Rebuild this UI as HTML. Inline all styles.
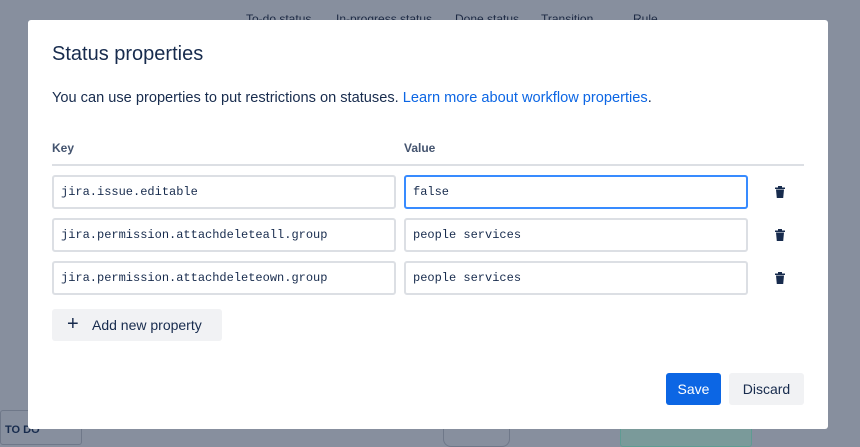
<!DOCTYPE html>
<html><head><style>
body{margin:0;width:860px;height:445px;background:#878f9e;font-family:"Liberation Sans",sans-serif;position:relative;overflow:hidden;color:#172b4d}
.bgt{position:absolute;top:12px;font-size:12px;color:#1d2a44}
.modal{position:absolute;left:28px;top:20px;width:800px;height:409px;background:#fff;border-radius:3px}
h1{position:absolute;left:24px;top:23px;margin:0;font-size:20px;font-weight:500;color:#172b4d}
.p{position:absolute;left:24px;top:70px;font-size:14.6px}
.p a{color:#0c66e4;text-decoration:none}
.lbl{position:absolute;top:121px;font-size:12px;font-weight:bold;color:#44546f}
.line{position:absolute;left:24px;top:144px;width:752px;height:2px;background:#dcdfe4}
.in{position:absolute;height:30px;border:2px solid #dcdfe4;border-radius:3px;box-sizing:content-box;font-family:"Liberation Mono",monospace;font-size:12px;line-height:30px;padding-left:7px;color:#172b4d}
.tr{position:absolute;left:745px}
.btn{position:absolute;border-radius:3px;font-size:14px;font-weight:500;text-align:center;line-height:32px}
</style></head><body>
<div class="bgt" style="left:246px">To-do status</div>
<div class="bgt" style="left:336px">In-progress status</div>
<div class="bgt" style="left:455px">Done status</div>
<div class="bgt" style="left:541px">Transition</div>
<div class="bgt" style="left:633px">Rule</div>
<div style="position:absolute;left:0;top:410px;width:82px;height:35px;border:1px solid #6f7889;border-radius:3px;box-sizing:border-box;font-size:11px;font-weight:bold;padding:13px 0 0 4px">TO DO</div>
<div style="position:absolute;left:620px;top:415px;width:130px;height:30px;border:1px solid #5f9b93;background:#7a9a9a;border-radius:3px"></div>
<div style="position:absolute;left:443px;top:415px;width:65px;height:30px;border:1px solid #6f7889;border-radius:8px"></div>
<div class="modal">
<h1>Status properties</h1>
<div class="p">You can use properties to put restrictions on statuses. <a>Learn more about workflow properties</a>.</div>
<div class="lbl" style="left:24px">Key</div>
<div class="lbl" style="left:376px">Value</div>
<div class="line"></div>
<div class="in" style="left:24px;top:155px;width:333px">jira.issue.editable</div>
<div class="in" style="left:376px;top:155px;width:333px;border-color:#388bff">false</div>
<div class="in" style="left:24px;top:198px;width:333px">jira.permission.attachdeleteall.group</div>
<div class="in" style="left:376px;top:198px;width:333px">people services</div>
<div class="in" style="left:24px;top:241px;width:333px">jira.permission.attachdeleteown.group</div>
<div class="in" style="left:376px;top:241px;width:333px">people services</div>
<svg class="tr" style="top:165px" width="14" height="14" viewBox="0 0 14 14"><path d="M2 2.5h10v1.5H2zM5 1h4v1.5H5zM3 4.5h8l-.8 8.5H3.8z" fill="#172b4d"/></svg>
<svg class="tr" style="top:208px" width="14" height="14" viewBox="0 0 14 14"><path d="M2 2.5h10v1.5H2zM5 1h4v1.5H5zM3 4.5h8l-.8 8.5H3.8z" fill="#172b4d"/></svg>
<svg class="tr" style="top:251px" width="14" height="14" viewBox="0 0 14 14"><path d="M2 2.5h10v1.5H2zM5 1h4v1.5H5zM3 4.5h8l-.8 8.5H3.8z" fill="#172b4d"/></svg>
<div class="btn" style="left:24px;top:289px;width:170px;background:#f1f2f4;text-align:left"><span style="font-size:20px;position:absolute;left:15px;top:-1px;font-weight:300">+</span><span style="margin-left:40px">Add new property</span></div>
<div class="btn" style="left:638px;top:353px;width:55px;background:#0c66e4;color:#fff">Save</div>
<div class="btn" style="left:701px;top:353px;width:75px;background:#f1f2f4">Discard</div>
</div>
</body></html>
